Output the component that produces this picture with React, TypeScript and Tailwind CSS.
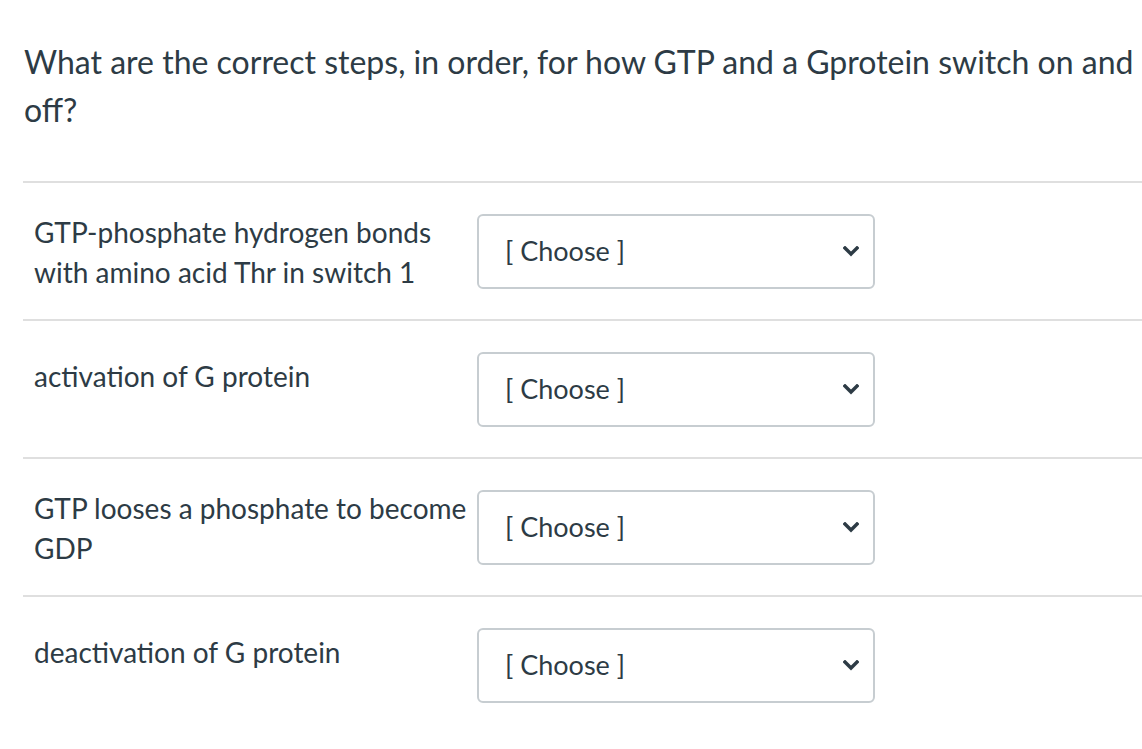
const rows = [
  { label: "GTP-phosphate hydrogen bonds with amino acid Thr in switch 1", twoLines: true },
  { label: "activation of G protein", twoLines: false },
  { label: "GTP looses a phosphate to become GDP", twoLines: true },
  { label: "deactivation of G protein", twoLines: false },
]

function Chevron() {
  return (
    <svg width="16" height="11" viewBox="0 0 16 11" className="shrink-0">
      <polyline points="2,2 8,8 14,2" fill="none" stroke="#2d3b45" strokeWidth="3.4" strokeLinecap="square" />
    </svg>
  )
}

export default function App() {
  return (
    <div className="min-h-screen bg-white text-[#2d3b45]" style={{ fontFamily: "Lato, 'Open Sans', sans-serif" }}>
      <div className="pl-[24px] pr-[8px] pt-[38px] pb-[47px] text-[32px] leading-[48px]">
        What are the correct steps, in order, for how GTP and a Gprotein switch on and off?
      </div>

      <div className="ml-[23px]">
        {rows.map((row, i) => (
          <div key={i} className="flex items-start border-t-2 border-[#dfdfdf] pt-[31px] pb-[30px]">
            <div className="h-[75px] w-[454px] shrink-0 pl-[11px] pr-[7px]">
              <div className={"text-[28px] leading-[40px] " + (row.twoLines ? "-mt-[2px]" : "mt-[4px]")}>
                {row.label}
              </div>
            </div>
            <div className="flex h-[75px] w-[398px] items-center justify-between rounded-[6px] border-2 border-[#c7cdd1] pl-[26px] pr-[14px] text-[27px]">
              <span>[ Choose ]</span>
              <Chevron />
            </div>
          </div>
        ))}
      </div>
    </div>
  )
}
